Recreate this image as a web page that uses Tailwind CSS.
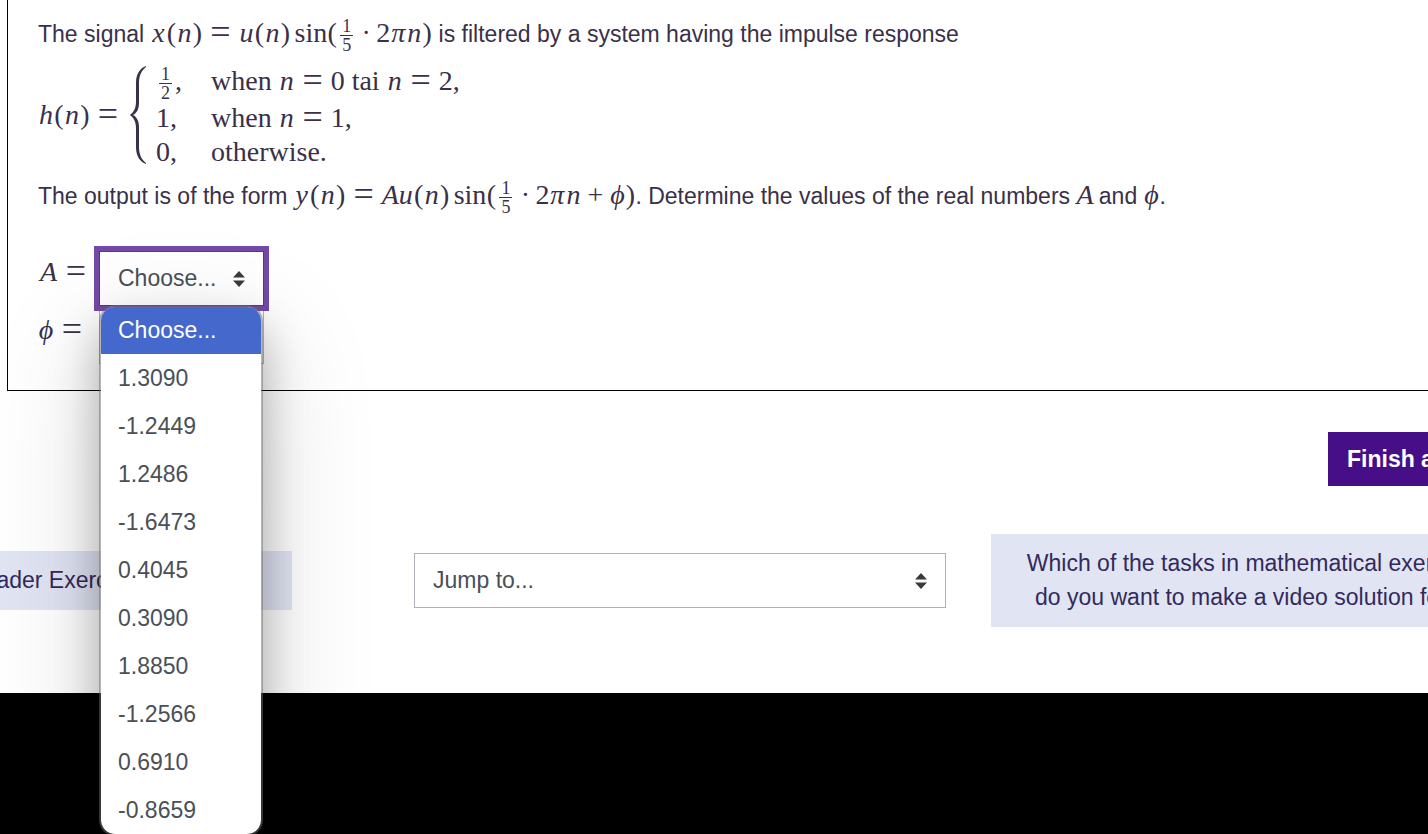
<!DOCTYPE html>
<html lang="en">
<head>
    <meta charset="UTF-8">
    <meta name="viewport" content="width=device-width, initial-scale=1.0">
    <title>Quiz</title>
    <script src="https://cdn.jsdelivr.net/npm/@tailwindcss/browser@4"></script>
</head>
<body class="min-h-screen overflow-hidden bg-black font-['Liberation_Sans',Arial,sans-serif] text-[23px] text-[#3a3048]">
    <main class="bg-white pb-[66px]">

        <!-- question: .m = formula, var = variable, .p = parenthesis, .eq / .op = operators, .f = fraction -->
        <section class="ml-[7px] border-b border-l border-black pt-[14px] pb-[26px] pl-[30px] [&_.m]:font-['Liberation_Serif',serif] [&_.m]:text-[28px] [&_.m]:whitespace-nowrap [&_var]:inline-block [&_var]:w-4 [&_var]:text-center [&_var]:italic [&_.p]:inline-block [&_.p]:w-[10px] [&_.p]:text-center [&_.eq]:mx-[7px] [&_.eq]:inline-block [&_.eq]:w-[22px] [&_.eq]:text-center [&_.eq]:align-[-2px] [&_.eq]:text-[36px] [&_.eq]:leading-none [&_.op]:inline-block [&_.op]:w-5 [&_.op]:text-center [&_.f]:mx-[3px] [&_.f]:inline-flex [&_.f]:w-[13px] [&_.f]:flex-col [&_.f]:text-center [&_.f]:align-middle [&_.f]:text-[18px] [&_.f]:leading-[18px]">
            <p class="h-9 leading-9 whitespace-nowrap">The signal <span class="m"><var>x</var><span class="p">(</span><var>n</var><span class="p">)</span><span class="eq">=</span><var>u</var><span class="p">(</span><var>n</var><span class="p">)</span><span class="ml-1">sin</span><span class="p">(</span><span class="f"><span class="border-b border-current">1</span><span>5</span></span><span class="op">·</span>2<var>π</var><var>n</var><span class="p">)</span></span> is filtered by a system having the impulse response</p>

            <div class="m mt-3 flex items-center">
                <span><var>h</var><span class="p">(</span><var>n</var><span class="p">)</span><span class="eq">=</span></span>
                <svg class="ml-1 h-[100px] w-[18px]" viewBox="0 0 18 100" fill="currentColor" aria-hidden="true">
                    <path d="M16 1C10 3 6 9 6 18V36C6 43 4 47 0 50C4 53 6 57 6 64V82C6 91 10 97 16 99V98C12 95 9 90 9 82V63C9 56 7 52 3 50C7 48 9 44 9 37V18C9 10 12 5 16 2Z"/>
                </svg>
                <div class="ml-2 grid grid-cols-[55px_auto] grid-rows-[38px_36px_32px] items-center">
                    <span><span class="f"><span class="border-b border-current">1</span><span>2</span></span>,</span>
                    <span>when <var>n</var><span class="eq">=</span>0 tai <var>n</var><span class="eq">=</span>2,</span>
                    <span>1,</span>
                    <span>when <var>n</var><span class="eq">=</span>1,</span>
                    <span>0,</span>
                    <span>otherwise.</span>
                </div>
            </div>

            <p class="mt-2 h-9 leading-9 whitespace-nowrap">The output is of the form <span class="m"><var>y</var><span class="p">(</span><var>n</var><span class="p">)</span><span class="eq">=</span><var>A</var><var>u</var><span class="p">(</span><var>n</var><span class="p">)</span><span class="ml-1">sin</span><span class="p">(</span><span class="f"><span class="border-b border-current">1</span><span>5</span></span><span class="op">·</span>2<var>π</var><var>n</var><span class="op mx-1">+</span><var>ϕ</var><span class="p">)</span></span>. Determine the values of the real numbers <span class="m"><var>A</var></span> and <span class="m"><var>ϕ</var></span>.</p>

            <div class="mt-[39px] flex items-start">
                <label for="answerA" class="m w-[61px] leading-[42px]"><var class="mx-[2px]">A</var><span class="eq">=</span></label>
                <div class="relative">
                    <select id="answerA" class="h-[55px] w-[165px] appearance-none border border-[#6f1fc9] bg-white px-[18px] text-[#495057] ring-5 ring-[#7549a8] outline-none">
                        <option>Choose...</option>
                    </select>
                    <svg class="pointer-events-none absolute top-5 right-[19px] h-4 w-3" viewBox="0 0 12 16" fill="#3a3a3a" aria-hidden="true"><path d="M6 0L12 6.500H0ZM6 16L0 9.500H12Z"/></svg>

                    <!-- open list of answers -->
                    <ul role="listbox" aria-label="A" class="absolute top-[54px] left-0 z-10 w-[164px] overflow-hidden rounded-[16px] border-2 border-[#6e6e6e]/50 bg-white bg-clip-padding text-[#495057] shadow-[0_24px_44px_rgba(0,0,0,0.28),0_30px_120px_rgba(0,0,0,0.14)]">
                        <li role="option" aria-selected="true" class="h-[47px] bg-[#4468cc] px-[17px] leading-[46px] text-white">Choose...</li>
                        <li role="option" class="h-12 px-[17px] leading-12">1.3090</li>
                        <li role="option" class="h-12 px-[17px] leading-12">-1.2449</li>
                        <li role="option" class="h-12 px-[17px] leading-12">1.2486</li>
                        <li role="option" class="h-12 px-[17px] leading-12">-1.6473</li>
                        <li role="option" class="h-12 px-[17px] leading-12">0.4045</li>
                        <li role="option" class="h-12 px-[17px] leading-12">0.3090</li>
                        <li role="option" class="h-12 px-[17px] leading-12">1.8850</li>
                        <li role="option" class="h-12 px-[17px] leading-12">-1.2566</li>
                        <li role="option" class="h-12 px-[17px] leading-12">0.6910</li>
                        <li role="option" class="h-12 px-[17px] leading-12">-0.8659</li>
                    </ul>
                </div>
            </div>

            <div class="mt-[3px] flex items-start">
                <label for="answerPhi" class="m w-[61px] leading-[42px]"><var>ϕ</var><span class="eq">=</span></label>
                <select id="answerPhi" class="h-[55px] w-[165px] appearance-none border border-[#adb2bd] bg-white px-[18px] text-[#495057]">
                    <option></option>
                </select>
            </div>
        </section>

        <div class="-mr-[120px] mt-[41px] flex justify-end">
            <button type="button" class="h-[54px] w-[220px] bg-[#460f88] pl-[19px] text-left font-bold whitespace-nowrap text-white">Finish attempt ...</button>
        </div>

        <nav class="mt-12 flex items-center">
            <a href="#" class="-ml-[33px] h-[59px] w-[325px] shrink-0 bg-[#e1e4f3] leading-[59px] whitespace-nowrap text-[#322a5c]">Reader Exercise</a>
            <div class="relative ml-[122px] flex-1">
                <select aria-label="Jump to..." class="block h-[55px] w-full appearance-none border border-[#adb2bd] bg-white px-[18px] text-[#495057]">
                    <option>Jump to...</option>
                </select>
                <svg class="pointer-events-none absolute top-5 right-[19px] h-4 w-3" viewBox="0 0 12 16" fill="#3a3a3a" aria-hidden="true"><path d="M6 0L12 6.500H0ZM6 16L0 9.500H12Z"/></svg>
            </div>
            <a href="#" class="-mr-[82px] ml-[45px] w-[519px] shrink-0 bg-[#e1e4f3] pt-3 pb-[13px] text-center leading-[34px] whitespace-nowrap text-[#322a5c]">Which of the tasks in mathematical exercise<br>do you want to make a video solution for ?</a>
        </nav>
    </main>
</body>
</html>
